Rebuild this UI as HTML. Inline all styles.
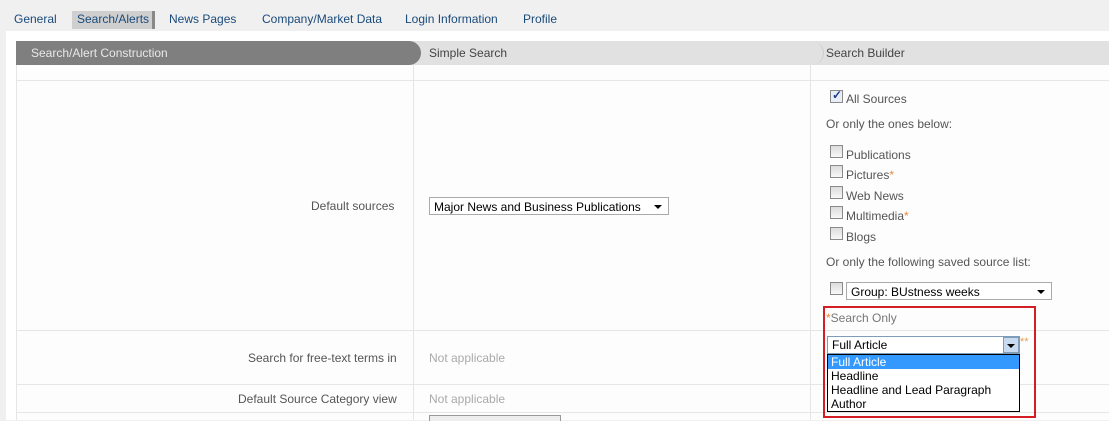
<!DOCTYPE html>
<html><head><style>
*{margin:0;padding:0;box-sizing:border-box}
body{width:1109px;height:420px;overflow:hidden;background:#f0f0f0;font-family:"Liberation Sans",Arial,sans-serif;font-size:12px;color:#555;position:relative}
.a{position:absolute;white-space:nowrap}
.tab{position:absolute;top:12px;color:#1a4a7a;font-size:12px}
.hl{position:absolute;height:1px;background:#e6e6e6}
.vl{position:absolute;width:1px;background:#e6e6e6}
.cb{position:absolute;width:13px;height:13px;border:1px solid #8a8a8a;background:linear-gradient(#dcdcdc,#f8f8f8)}
.star{color:#e8883a}
.sel{position:absolute;height:18px;border:1px solid #aaa;background:#fff;color:#000;font-size:12px;padding:2px 4px}
.arr{position:absolute;right:6px;top:7px;width:0;height:0;border-left:4px solid transparent;border-right:4px solid transparent;border-top:4px solid #000}
</style></head><body>
<div class="a" style="left:72px;top:11px;width:83px;height:18px;background:#cfcfcf;border-right:3px solid #888"></div>
<div class="tab" style="left:14px">General</div>
<div class="tab" style="left:77px">Search/Alerts</div>
<div class="tab" style="left:169px">News Pages</div>
<div class="tab" style="left:262px">Company/Market Data</div>
<div class="tab" style="left:405px">Login Information</div>
<div class="tab" style="left:523px">Profile</div>

<div class="a" style="left:6px;top:31px;width:1103px;height:389px;background:#fff"></div>
<div class="a" style="left:16px;top:65px;width:1093px;height:355px;background:#fdfdfd;border-left:1px solid #e6e6e6"></div>
<!-- header -->
<div class="a" style="left:16px;top:41px;width:1093px;height:24px;background:#e1e1e1"></div>
<div class="a" style="left:810px;top:41px;width:14px;height:24px;border-radius:0 12px 12px 0;border-right:1px solid #ccc;background:#e1e1e1"></div>
<div class="a" style="left:16px;top:41px;width:405px;height:24px;background:#7f7f7f;border-radius:0 12px 12px 0"></div>
<div class="a" style="left:31px;top:46px;color:#e8e8e8">Search/Alert Construction</div>
<div class="a" style="left:429px;top:46px;color:#444">Simple Search</div>
<div class="a" style="left:826px;top:46px;color:#444">Search Builder</div>

<div class="hl" style="left:16px;top:80px;width:1093px"></div>
<div class="hl" style="left:16px;top:330px;width:1093px"></div>
<div class="hl" style="left:16px;top:384px;width:1093px"></div>
<div class="hl" style="left:16px;top:412px;width:1093px"></div>
<div class="vl" style="left:413px;top:65px;height:355px"></div>
<div class="vl" style="left:810px;top:65px;height:355px"></div>

<div class="a" style="left:311px;top:199px">Default sources</div>
<div class="a" style="left:248px;top:351px">Search for free-text terms in</div>
<div class="a" style="left:238px;top:392px">Default Source Category view</div>
<div class="a" style="left:429px;top:351px;color:#aaa">Not applicable</div>
<div class="a" style="left:429px;top:392px;color:#aaa">Not applicable</div>
<div class="a" style="left:429px;top:415px;width:132px;height:6px;border:1px solid #999;border-bottom:none;background:#eee"></div>

<div class="sel" style="left:429px;top:197px;width:240px">Major News and Business Publications<div class="arr"></div></div>

<div class="cb" style="left:830px;top:90px;background:#e8eef8"><span style="position:absolute;left:1px;top:-3px;font-size:12px;color:#1d3c8c;font-weight:bold">✓</span></div>
<div class="a" style="left:846px;top:92px">All Sources</div>
<div class="a" style="left:826px;top:117px">Or only the ones below:</div>
<div class="cb" style="left:830px;top:145px"></div><div class="a" style="left:846px;top:148px">Publications</div>
<div class="cb" style="left:830px;top:165px"></div><div class="a" style="left:846px;top:168px">Pictures<span class="star">*</span></div>
<div class="cb" style="left:830px;top:186px"></div><div class="a" style="left:846px;top:189px">Web News</div>
<div class="cb" style="left:830px;top:206px"></div><div class="a" style="left:846px;top:209px">Multimedia<span class="star">*</span></div>
<div class="cb" style="left:830px;top:227px"></div><div class="a" style="left:846px;top:230px">Blogs</div>
<div class="a" style="left:826px;top:255px">Or only the following saved source list:</div>
<div class="cb" style="left:830px;top:282px"></div>
<div class="sel" style="left:846px;top:282px;width:206px;padding-top:2px">Group: BUstness weeks<div class="arr"></div></div>

<div class="a" style="left:823px;top:306px;width:213px;height:112px;border:2px solid #d21e24"></div>
<div class="a" style="left:826px;top:311px;color:#777"><span class="star">*</span>Search Only</div>
<div class="sel" style="left:827px;top:336px;width:193px;height:18px;border-color:#7f9db9;padding:1px 4px">Full Article
<div style="position:absolute;right:0;top:0;width:16px;height:16px;background:#c8daf0;border:1px solid #7f9db9"><div class="arr" style="right:3px;top:6px"></div></div></div>
<div class="a" style="left:1020px;top:336px;color:#e8a050;font-size:11px">**</div>
<div class="a" style="left:827px;top:354px;width:193px;height:58px;border:1px solid #000;background:#fff;color:#000;line-height:14px">
<div style="background:#3399ff;color:#fff;padding-left:3px">Full Article</div>
<div style="padding-left:3px">Headline</div>
<div style="padding-left:3px">Headline and Lead Paragraph</div>
<div style="padding-left:3px">Author</div>
</div>
</body></html>
